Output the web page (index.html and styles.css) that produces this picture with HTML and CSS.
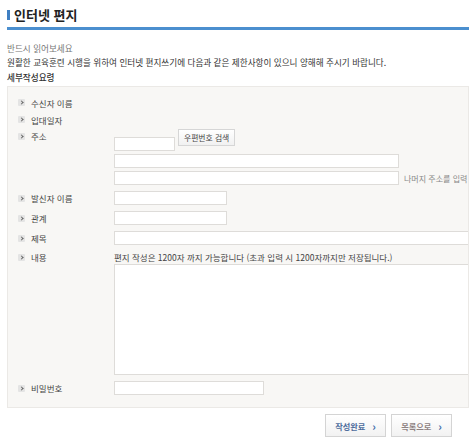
FILE: index.html
```html
<!DOCTYPE html>
<html lang="ko">
<head>
<meta charset="utf-8">
<link rel="stylesheet" href="styles.css">
</head>
<body>
<div class="page">
  <div class="title"><span class="title-bar"></span><h1>인터넷 편지</h1></div>
  <div class="title-line"></div>
  <p class="notice-head">반드시 읽어보세요</p>
  <p class="notice">원활한 교육훈련 시행을 위하여 인터넷 편지쓰기에 다음과 같은 제한사항이 있으니 양해해 주시기 바랍니다.</p>
  <p class="section">세부작성요령</p>
  <div class="panel">
    <div class="row short"><div class="label"><span class="bul"></span>수신자 이름</div><div class="field"></div></div>
    <div class="row short"><div class="label"><span class="bul"></span>입대일자</div><div class="field"></div></div>
    <div class="row addr">
      <div class="label"><span class="bul"></span>주소</div>
      <div class="field">
        <div class="zip"><span class="inp w60 zipinp"></span><span class="btn-zip">우편번호 검색</span></div>
        <span class="inp w285"></span>
        <div class="line2"><span class="inp w285"></span><span class="hint">나머지 주소를 입력</span></div>
      </div>
    </div>
    <div class="row"><div class="label"><span class="bul"></span>발신자 이름</div><div class="field"><span class="inp w113"></span></div></div>
    <div class="row"><div class="label"><span class="bul"></span>관계</div><div class="field"><span class="inp w113"></span></div></div>
    <div class="row"><div class="label"><span class="bul"></span>제목</div><div class="field"><span class="inp wide"></span></div></div>
    <div class="row content">
      <div class="label"><span class="bul"></span>내용</div>
      <div class="field">
        <div class="limit">편지 작성은 1200자 까지 가능합니다 (초과 입력 시 1200자까지만 저장됩니다.)</div>
        <span class="textarea"></span>
      </div>
    </div>
    <div class="row"><div class="label"><span class="bul"></span>비밀번호</div><div class="field"><span class="inp w150"></span></div></div>
  </div>
  <div class="buttons">
    <span class="btn btn-blue">작성완료<span class="arr">›</span></span>
    <span class="btn btn-gray">목록으로<span class="arr">›</span></span>
  </div>
</div>
</body>
</html>
```
FILE: styles.css
```css
html, body {
  margin: 0;
  padding: 0;
  background: #fff;
  overflow: hidden;
}
body {
  font-family: "Noto Sans CJK KR", "Noto Sans", sans-serif;
  color: #333;
}
.page {
  padding: 7px 5px 0 7px;
}
.title {
  display: flex;
  align-items: center;
  height: 16px;
}
.title-bar {
  width: 3px;
  height: 10px;
  background: #3f7fc2;
  margin-right: 4px;
}
.title h1 {
  margin: 0;
  font-size: 13px;
  line-height: 16px;
  font-weight: bold;
  color: #222;
}
.title-line {
  margin-top: 4px;
  height: 3px;
  background: #4b8fcf;
}
p {
  margin: 0;
  font-size: 8.6px;
  line-height: 14px;
}
.notice-head {
  margin-top: 11px;
  color: #777;
}
.notice {
  color: #333;
  line-height: 15px;
}
.section {
  color: #333;
  font-weight: 500;
}
.panel {
  margin-top: 2px;
  background: #f8f7f5;
  border: 1px solid #ebe9e6;
  padding: 7px 0 9px 0;
  overflow: hidden;
}
.row {
  display: grid;
  grid-template-columns: 106px 1fr;
  align-items: center;
  height: 20px;
}
.row.short {
  height: 17px;
}
.row.addr, .row.content {
  align-items: start;
  height: auto;
}
.row.addr {
  padding-top: 2px;
  padding-bottom: 3px;
}
.row.content {
  padding-top: 3px;
  padding-bottom: 3px;
}
.label {
  display: flex;
  align-items: center;
  font-size: 8.5px;
  line-height: 12px;
  color: #444;
  padding-left: 10px;
  white-space: nowrap;
}
.bul {
  width: 7px;
  height: 7px;
  background: #e4e4e4;
  border-radius: 1px;
  margin-right: 6px;
  position: relative;
  flex: none;
}
.bul::after {
  content: "";
  position: absolute;
  left: 1.5px;
  top: 2px;
  width: 2px;
  height: 2px;
  border-right: 1px solid #666;
  border-bottom: 1px solid #666;
  transform: rotate(-45deg);
}
.field {
  display: flex;
  flex-direction: column;
  align-items: flex-start;
  min-width: 0;
}
.inp {
  display: block;
  height: 12px;
  background: #fff;
  border: 1px solid #dedcd9;
  flex: none;
}
.w60 { width: 59px; }
.w113 { width: 111px; }
.w150 { width: 148px; }
.w285 { width: 283px; }
.wide { width: 400px; }
.zip {
  display: flex;
  align-items: flex-start;
  margin-top: -1px;
}
.zipinp {
  margin-top: 8px;
}
.btn-zip {
  margin-left: 3px;
  height: 15px;
  padding: 0 5px;
  border: 1px solid #d6d6d6;
  background: linear-gradient(#ffffff, #f1f1f1);
  font-size: 7.8px;
  line-height: 15px;
  color: #444;
  white-space: nowrap;
}
.addr .field > .w285 {
  margin-top: 3px;
}
.line2 {
  display: flex;
  align-items: center;
  margin-top: 3px;
}
.hint {
  margin-left: 5px;
  font-size: 8px;
  color: #888;
  white-space: nowrap;
}
.limit {
  font-size: 8.5px;
  line-height: 12px;
  color: #444;
  white-space: nowrap;
}
.textarea {
  display: block;
  margin-top: 1px;
  width: 400px;
  height: 109px;
  background: #fff;
  border: 1px solid #dedcd9;
}
.buttons {
  display: flex;
  justify-content: flex-end;
  gap: 5px;
  margin-top: 6px;
  padding-right: 17px;
}
.btn {
  display: flex;
  align-items: center;
  justify-content: center;
  width: 59px;
  height: 21px;
  border: 1px solid #d4d4d4;
  background: linear-gradient(#ffffff, #f2f2f2);
  font-size: 8.2px;
  font-weight: bold;
  white-space: nowrap;
}
.btn-blue { color: #4e6d9d; }
.btn-gray { color: #8e8282; }
.arr {
  margin-left: 7px;
  color: #3a68a8;
  font-size: 11px;
  font-weight: bold;
  line-height: 10px;
}
```
